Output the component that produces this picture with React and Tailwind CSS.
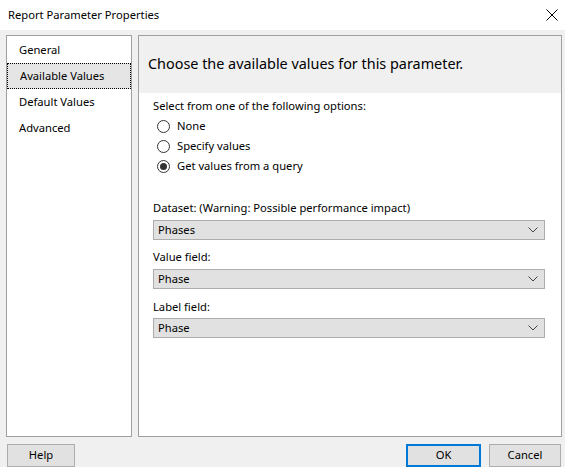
import React from "react";

const font = { fontFamily: '"Segoe UI", "Noto Sans", "Open Sans", sans-serif' };

function Radio({ checked, label }) {
  return (
    <div className="flex items-center h-5 gap-[7px]">
      <span className="w-[13px] h-[13px] rounded-full border border-[#333] bg-white flex items-center justify-center">
        {checked && <span className="w-[7px] h-[7px] rounded-full bg-[#333]" />}
      </span>
      <span>{label}</span>
    </div>
  );
}

function Select({ value }) {
  return (
    <div className="h-5 border border-[#adadad] bg-[#e1e1e1] flex items-center justify-between pl-[4px] pr-[6px]">
      <span>{value}</span>
      <svg width="10" height="6" viewBox="0 0 10 6">
        <path d="M0.5 0.5 L5 5 L9.5 0.5" fill="none" stroke="#444" strokeWidth="1" />
      </svg>
    </div>
  );
}

export default function App() {
  const items = ["General", "Available Values", "Default Values", "Advanced"];
  return (
    <div style={font} className="w-[565px] h-[467px] bg-[#f0f0f0] text-[11.2px] text-black flex flex-col overflow-hidden">
      <div className="h-[30px] bg-white flex items-center justify-between pl-[8px] pr-[6px]">
        <span>Report Parameter Properties</span>
        <svg width="12" height="12" viewBox="0 0 12 12" className="mr-[1px]">
          <path d="M0.5 0.5 L11.5 11.5 M11.5 0.5 L0.5 11.5" stroke="#000" strokeWidth="1" />
        </svg>
      </div>

      <div className="flex gap-[6px] pl-[6px] pr-[3px] pt-[5px] h-[407px]">
        <div className="w-[126px] border border-[#a0a0a0] bg-white pt-[1px]">
          {items.map((it) => (
            <div
              key={it}
              className={
                "h-[26px] flex items-center pl-[12px] " +
                (it === "Available Values" ? "bg-[#e5e5e5] border border-dotted border-black pl-[11px]" : "")
              }
            >
              {it}
            </div>
          ))}
        </div>

        <div className="flex-1 border border-[#a0a0a0] bg-white flex flex-col">
          <div className="h-[57px] bg-[#f0f0f0] flex items-center pl-[9px] text-[14.4px] pb-[2px]">
            Choose the available values for this parameter.
          </div>
          <div className="pl-[14px] pr-[16px] pt-[3px]">
            <div className="h-5 flex items-center">Select from one of the following options:</div>
            <div className="pl-[4px]">
              <Radio label="None" />
              <Radio label="Specify values" />
              <Radio checked label="Get values from a query" />
            </div>
            <div className="h-5 flex items-center mt-[22px]">Dataset: (Warning: Possible performance impact)</div>
            <div className="mt-[2px]">
              <Select value="Phases" />
            </div>
            <div className="h-5 flex items-center mt-[7px]">Value field:</div>
            <div className="mt-[2px]">
              <Select value="Phase" />
            </div>
            <div className="h-5 flex items-center mt-[8px]">Label field:</div>
            <div className="mt-[1px]">
              <Select value="Phase" />
            </div>
          </div>
        </div>
      </div>

      <div className="flex items-center justify-between pl-[7px] pr-[4px] mt-[7px]">
        <button className="w-[68px] h-[23px] border border-[#adadad] bg-[#e1e1e1]">Help</button>
        <div className="flex gap-[8px]">
          <button className="w-[75px] h-[23px] border-2 border-[#0078d7] bg-[#e1e1e1]">OK</button>
          <button className="w-[72px] h-[23px] border border-[#adadad] bg-[#e1e1e1]">Cancel</button>
        </div>
      </div>
    </div>
  );
}
